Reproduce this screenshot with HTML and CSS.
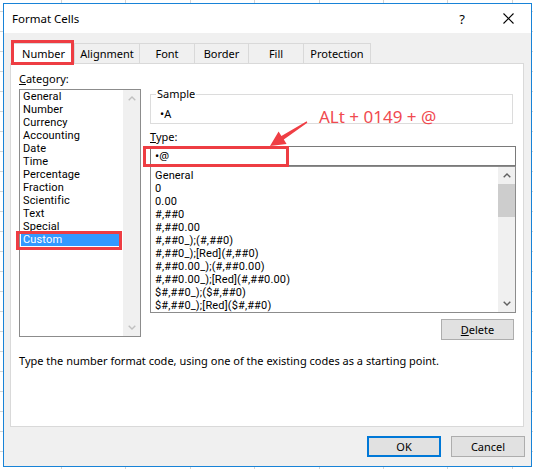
FILE: index.html
```html
<!DOCTYPE html>
<html lang="en">
<head>
<meta charset="utf-8">
<title>Format Cells</title>
<link rel="stylesheet" href="styles.css">
</head>
<body>
<div class="dialog">
  <div class="titlebar">
    <span class="title">Format Cells</span>
    <span class="capbtn help">?</span>
    <span class="capbtn close">
      <svg width="11" height="11" viewBox="0 0 11 11"><path d="M0.5 0.5 L10.5 10.5 M10.5 0.5 L0.5 10.5" stroke="#000" stroke-width="1.1" fill="none"/></svg>
    </span>
  </div>
  <div class="content">
    <div class="tabs">
      <div class="tab active w-number">Number<span class="mark mark-tab"></span></div>
      <div class="tab w-align">Alignment</div>
      <div class="tab w-font">Font</div>
      <div class="tab w-border">Border</div>
      <div class="tab w-fill">Fill</div>
      <div class="tab w-prot">Protection</div>
    </div>
    <div class="panel">
      <div class="top">
        <div class="leftcol">
          <div class="label"><u>C</u>ategory:</div>
          <div class="listbox cat">
            <ul class="items">
              <li>General</li>
              <li>Number</li>
              <li>Currency</li>
              <li>Accounting</li>
              <li>Date</li>
              <li>Time</li>
              <li>Percentage</li>
              <li>Fraction</li>
              <li>Scientific</li>
              <li>Text</li>
              <li>Special</li>
              <li class="selected">Custom<span class="mark mark-item"></span></li>
            </ul>
            <div class="vscroll disabled">
              <div class="sbtn"><svg width="8" height="5" viewBox="0 0 8 5"><path d="M0.7 4.3 L4 1 L7.3 4.3" /></svg></div>
              <div class="track"></div>
              <div class="sbtn"><svg width="8" height="5" viewBox="0 0 8 5"><path d="M0.7 0.7 L4 4 L7.3 0.7" /></svg></div>
            </div>
          </div>
        </div>
        <div class="rightcol">
          <fieldset class="sample">
            <legend>Sample</legend>
            <div class="sample-val">•A</div>
          </fieldset>
          <div class="note">ALt + 0149 + @</div>
          <svg class="arrow" width="46" height="32" viewBox="0 0 46 32">
            <polygon points="41.7,4.3 16.4,19 13.6,14.6 5,29 21.6,27 18.8,22.6 42.3,5.7" fill="#ef3e44"/>
          </svg>
          <div class="label type-label"><u>T</u>ype:</div>
          <div class="input">•@<span class="mark mark-input"></span></div>
          <div class="listbox types">
            <ul class="items">
              <li>General</li>
              <li>0</li>
              <li>0.00</li>
              <li>#,##0</li>
              <li>#,##0.00</li>
              <li>#,##0_);(#,##0)</li>
              <li>#,##0_);[Red](#,##0)</li>
              <li>#,##0.00_);(#,##0.00)</li>
              <li>#,##0.00_);[Red](#,##0.00)</li>
              <li>$#,##0_);($#,##0)</li>
              <li>$#,##0_);[Red]($#,##0)</li>
            </ul>
            <div class="vscroll">
              <div class="sbtn"><svg width="8" height="5" viewBox="0 0 8 5"><path d="M0.7 4.3 L4 1 L7.3 4.3" /></svg></div>
              <div class="track"><div class="thumb"></div></div>
              <div class="sbtn"><svg width="8" height="5" viewBox="0 0 8 5"><path d="M0.7 0.7 L4 4 L7.3 0.7" /></svg></div>
            </div>
          </div>
          <div class="btnrow">
            <button class="btn delete"><u>D</u>elete</button>
          </div>
        </div>
      </div>
      <p class="desc">Type the number format code, using one of the existing codes as a starting point.</p>
    </div>
    <div class="footer">
      <button class="btn ok">OK</button>
      <button class="btn cancel">Cancel</button>
    </div>
  </div>
</div>
</body>
</html>
```
FILE: styles.css
```css
* { box-sizing: border-box; }
html, body { margin: 0; }
body {
  width: 533px;
  height: 469px;
  overflow: hidden;
  padding: 3px 2px 3px 3px;
  font-family: "Noto Sans", "Segoe UI", "Liberation Sans", sans-serif;
  font-size: 11px;
  color: #000;
  background-color: #fff;
  background-image:
    repeating-linear-gradient(90deg, transparent 0 61px, #d4d4d4 61px 62px, transparent 62px 64.4px),
    repeating-linear-gradient(180deg, transparent 0 11px, #d4d4d4 11px 12px, transparent 12px 20px);
}

.dialog {
  width: 529px;
  height: 464px;
  border: 1px solid #1883d7;
  background: #f0f0f0;
  display: flex;
  flex-direction: column;
}

.titlebar {
  height: 29px;
  background: #fff;
  display: flex;
  align-items: center;
  padding-left: 8px;
  flex: none;
}
.title { flex: 1; font-size: 11.5px; }
.capbtn {
  width: 46px;
  height: 29px;
  display: flex;
  align-items: center;
  justify-content: center;
}
.help { font-size: 13px; }

.content {
  flex: 1;
  display: flex;
  flex-direction: column;
  padding: 10px 7px 0 6px;
}

.tabs {
  display: flex;
  height: 20px;
  margin-left: 2px;
  position: relative;
  z-index: 1;
}
.tab {
  position: relative;
  height: 20px;
  line-height: 19px;
  text-align: center;
  border: 1px solid #d9d9d9;
  border-bottom: none;
  margin-right: -1px;
  background: #f0f0f0;
}
.tab.active { background: #fff; height: 21px; }
.w-number { width: 63px; }
.w-align { width: 66px; }
.w-font { width: 56px; }
.w-border { width: 55px; }
.w-fill { width: 56px; }
.w-prot { width: 68px; }

.mark {
  position: absolute;
  border: 3px solid #ee3d43;
  pointer-events: none;
}
.mark-tab { left: -2px; top: -4px; right: 0; bottom: -1px; }
.mark-item { left: -5px; right: -3px; top: -2px; bottom: -4px; }
.mark-input { left: -8px; top: -1px; width: 146px; height: 21px; }

.panel {
  height: 364px;
  background: #fff;
  border: 1px solid #d9d9d9;
  padding: 7px 6px 0 8px;
  display: flex;
  flex-direction: column;
  flex: none;
}
.top { display: flex; }
.leftcol { width: 122px; }
.rightcol { width: 366px; margin-left: 9px; position: relative; }

.label { line-height: 16px; height: 16px; }

.listbox {
  border: 1px solid #8c8c8c;
  display: flex;
  background: #fff;
}
.listbox.cat { height: 248px; margin-top: 2px; }
.listbox.types { height: 147px; }
.items {
  list-style: none;
  margin: 0;
  padding: 0;
  flex: 1;
  font-family: Roboto, "Noto Sans", sans-serif;
  font-size: 11px;
  letter-spacing: 0.15px;
}
.items li { height: 13px; line-height: 13px; white-space: nowrap; }
.cat .items li { padding-left: 3px; }
.cat .items li.selected {
  position: relative;
  margin: 0 4px 0 1px;
  padding-left: 2px;
  background: #3399ff;
  color: #fff;
}
.types .items { padding-top: 2px; }
.types .items li { padding-left: 4px; }

.vscroll {
  width: 17px;
  background: #f0f0f0;
  display: flex;
  flex-direction: column;
}
.sbtn {
  height: 17px;
  display: flex;
  align-items: center;
  justify-content: center;
}
.sbtn svg path { fill: none; stroke: #606060; stroke-width: 1.4; }
.vscroll.disabled .sbtn svg path { stroke: #c0c0c0; }
.track { flex: 1; }
.thumb { height: 33px; background: #cdcdcd; }

.sample {
  margin: 16px 3px 0 0;
  padding: 6px 8px 2px;
  border: 1px solid #dcdcdc;
  min-width: 0;
}
.sample legend {
  padding: 0 1px;
  margin-left: -3px;
  line-height: 14px;
}
.sample-val { line-height: 14px; padding-left: 1px; }

.note {
  position: absolute;
  left: 169px;
  top: 35px;
  font-size: 17px;
  line-height: 22px;
  color: #f04a4f;
  white-space: nowrap;
}
.arrow {
  position: absolute;
  left: 115px;
  top: 46px;
}

.type-label { margin-top: 5px; }

.input {
  position: relative;
  height: 20px;
  margin-top: 1px;
  border: 1px solid #7a7a7a;
  line-height: 18px;
  padding-left: 4px;
  background: #fff;
}

.btnrow {
  display: flex;
  justify-content: flex-end;
  margin-top: 6px;
  padding-right: 2px;
}

.btn {
  font-family: inherit;
  font-size: 11px;
  color: #000;
  height: 21px;
  width: 74px;
  padding: 0;
  background: #e1e1e1;
  border: 1px solid #adadad;
  line-height: 19px;
}
.btn.delete { width: 73px; }
.btn.ok { border: 2px solid #0078d7; line-height: 17px; }

.desc {
  margin: 13px 0 0;
  line-height: 16px;
  white-space: nowrap;
}

.footer {
  display: flex;
  justify-content: flex-end;
  gap: 10px;
  padding-top: 9px;
  margin-right: -1px;
}
```
